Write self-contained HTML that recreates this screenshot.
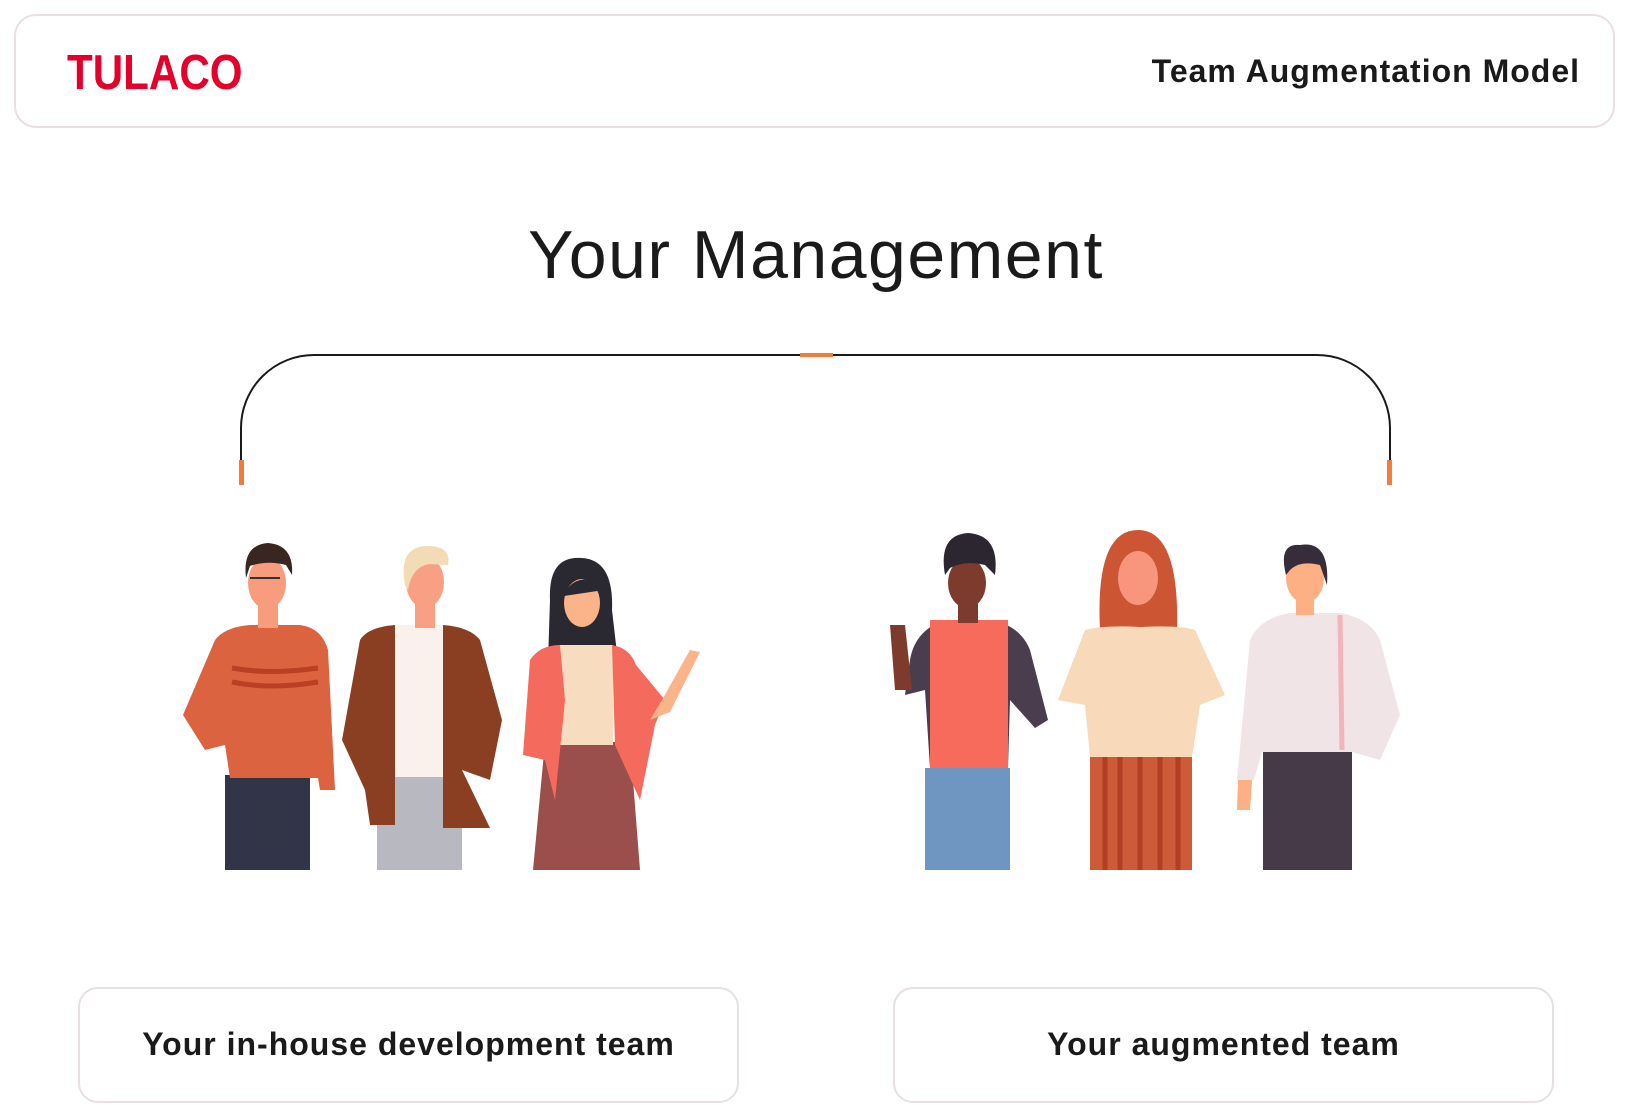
<!DOCTYPE html>
<html><head><meta charset="utf-8"><style>
html,body{margin:0;padding:0;background:#fff;width:1632px;height:1119px;overflow:hidden;font-family:"Liberation Sans",sans-serif;}
.hdr{position:absolute;left:14px;top:14px;width:1601px;height:114px;border:2px solid #e8dfe2;border-radius:22px;box-sizing:border-box;}
.logo{position:absolute;left:67px;top:45px;font-size:49px;font-weight:bold;color:#e4002b;transform:scaleX(0.86);transform-origin:left top;}
.ttl{position:absolute;right:52px;top:53px;font-size:32px;font-weight:bold;color:#1a1a1a;letter-spacing:1px;}
.main{position:absolute;left:0;width:1632px;top:216px;text-align:center;font-size:68px;color:#1a1a1a;letter-spacing:1.5px;}
.box{position:absolute;top:987px;height:116px;width:661px;border:2px solid #e8dfe2;border-radius:20px;box-sizing:border-box;text-align:center;line-height:110px;font-size:32px;font-weight:bold;color:#1a1a1a;letter-spacing:1px;}
</style></head><body>
<div class="hdr"></div>
<div class="logo">TULACO</div>
<div class="ttl">Team Augmentation Model</div>
<div class="main">Your Management</div>
<svg width="1632" height="1119" style="position:absolute;left:0;top:0">
<path d="M241 484 V428 A73 73 0 0 1 314 355 H1317 A73 73 0 0 1 1390 428 V484" fill="none" stroke="#1a1a1a" stroke-width="2"/>
<rect x="800" y="353" width="33" height="4" fill="#f47b3b"/>
<rect x="239" y="460" width="5" height="25" fill="#f47b3b"/>
<rect x="1387" y="460" width="5" height="25" fill="#f47b3b"/>
<!-- fig1 -->
<rect x="225" y="775" width="85" height="95" fill="#323448"/>
<path d="M183 715 L215 640 Q225 627 250 625 H300 Q322 628 328 650 L335 790 H320 L318 778 H230 L225 745 L205 750 Z" fill="#dc6340"/>
<path d="M232 668 Q270 675 318 668 M232 682 Q270 690 318 682" stroke="#bb3f22" stroke-width="5" fill="none"/>
<rect x="258" y="600" width="20" height="28" fill="#f79c7d"/>
<ellipse cx="267" cy="583" rx="19" ry="26" fill="#f79c7d"/>
<path d="M246 578 Q242 545 268 543 Q294 545 292 575 L286 565 Q268 560 250 566 Z" fill="#3a2620"/>
<path d="M250 578 h30" stroke="#333" stroke-width="2"/>
<!-- fig2 -->
<rect x="377" y="775" width="85" height="95" fill="#b8b8c0"/>
<rect x="395" y="625" width="50" height="152" fill="#fbf1ec"/>
<path d="M342 740 L360 640 Q368 627 395 625 V825 H370 L365 790 Z" fill="#8b3f22"/>
<path d="M443 625 Q470 627 480 640 L502 720 L490 780 L462 770 L490 828 H443 Z" fill="#8b3f22"/>
<rect x="415" y="600" width="20" height="28" fill="#f99f83"/>
<ellipse cx="425" cy="582" rx="19" ry="26" fill="#f99f83"/>
<path d="M405 585 Q398 548 425 546 Q452 545 448 565 L430 564 Q412 566 408 590 Z" fill="#f3dcb5"/>
<!-- fig3 -->
<path d="M550 600 Q548 555 582 558 Q614 560 612 610 L618 662 H548 Z" fill="#2a2830"/>
<path d="M533 870 L545 742 H630 L640 870 Z" fill="#9a4f4c"/>
<rect x="558" y="645" width="55" height="100" fill="#f7dcc0"/>
<path d="M523 755 L530 660 Q540 645 560 645 L565 700 L555 800 L545 760 Z M612 645 Q630 648 636 665 L665 700 L655 725 L640 800 L615 745 Z" fill="#f46b5d"/>
<path d="M650 720 L662 700 L690 650 L700 652 L670 712 Z" fill="#fbb38a"/>
<ellipse cx="582" cy="603" rx="18" ry="24" fill="#fbb38a"/>
<path d="M564 596 Q570 575 600 580 L604 590 Z" fill="#2a2830"/>
<!-- fig4 -->
<rect x="925" y="768" width="85" height="102" fill="#6f96c0"/>
<path d="M910 660 Q915 630 945 620 H990 Q1020 625 1030 650 L1048 720 L1035 728 L1010 700 L1008 768 H930 L925 690 L905 695 Z" fill="#4a3d4e"/>
<rect x="930" y="620" width="78" height="148" fill="#f76b5c"/>
<path d="M895 690 L890 625 L905 625 L912 690 Z" fill="#7d3b2e"/>
<rect x="958" y="598" width="20" height="25" fill="#7d3b2e"/>
<ellipse cx="967" cy="583" rx="19" ry="25" fill="#7d3b2e"/>
<path d="M945 575 Q938 535 968 533 Q1000 535 995 575 L985 565 Q965 560 950 568 Z" fill="#2b2630"/>
<!-- fig5 -->
<path d="M1100 630 Q1095 530 1138 530 Q1180 530 1177 632 Z" fill="#cc5634"/>
<rect x="1090" y="755" width="102" height="115" fill="#cd5a38"/>
<path d="M1105 755v115M1120 755v115M1140 755v115M1160 755v115M1178 755v115" stroke="#b23f24" stroke-width="5"/>
<path d="M1058 700 L1085 630 Q1105 625 1140 627 Q1180 625 1195 630 L1225 695 L1200 705 L1192 757 H1090 L1085 705 Z" fill="#f8d9b9"/>
<ellipse cx="1138" cy="578" rx="20" ry="27" fill="#f8967d"/>
<!-- fig6 -->
<rect x="1263" y="750" width="89" height="120" fill="#463a48"/>
<path d="M1237 780 L1250 640 Q1260 618 1290 613 H1340 Q1370 618 1380 640 L1400 715 L1380 760 L1352 752 H1262 L1254 780 Z" fill="#f1e4e6"/>
<path d="M1340 615 L1342 750" stroke="#f2b3bb" stroke-width="5"/>
<path d="M1238 780 L1237 810 L1250 810 L1252 780 Z" fill="#fdb083"/>
<ellipse cx="1305" cy="578" rx="19" ry="25" fill="#fdb083"/>
<rect x="1296" y="595" width="18" height="20" fill="#fdb083"/>
<path d="M1286 575 Q1278 543 1300 545 Q1330 540 1327 585 L1320 565 Q1300 560 1290 570 Z" fill="#372d3a"/>
</svg>
<div class="box" style="left:78px">Your in-house development team</div>
<div class="box" style="left:893px">Your augmented team</div>
</body></html>
